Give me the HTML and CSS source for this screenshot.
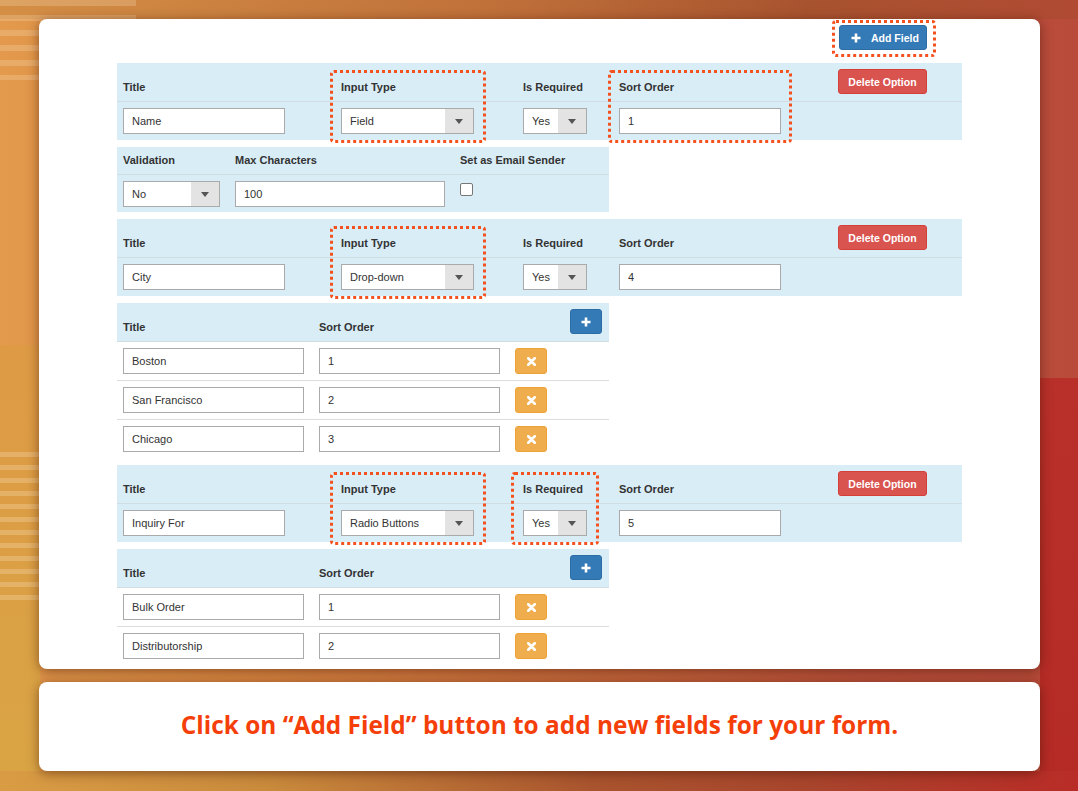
FILE: index.html
```html
<!DOCTYPE html>
<html>
<head>
<meta charset="utf-8">
<title>Form fields</title>
<link rel="stylesheet" href="styles.css">
</head>
<body>
<div class="page">
  <section class="card main-card">
    <div class="toolbar">
      <div class="add-wrap">
        <button class="btn btn-primary btn-add"><svg class="ico" viewBox="0 0 10 10" width="10" height="10"><path d="M5 0.5v9M0.5 5h9" stroke="#fff" stroke-width="2.6" fill="none"/></svg><span>Add Field</span></button>
        <span class="hl hl-add"></span>
      </div>
    </div>

    <div class="stack">
      <!-- Field 1 -->
      <div class="fblock">
        <div class="fgrid">
          <div class="th">Title</div>
          <div class="th">Input Type</div>
          <div class="th">Is Required</div>
          <div class="th">Sort Order</div>
          <div class="th"><button class="btn btn-danger">Delete Option</button></div>
          <div class="td"><input class="inp w-title" type="text" value="Name"></div>
          <div class="td"><div class="select w-type"><span class="sv">Field</span><span class="caret"></span></div></div>
          <div class="td"><div class="select w-req"><span class="sv">Yes</span><span class="caret"></span></div></div>
          <div class="td"><input class="inp w-title" type="text" value="1"></div>
          <div class="td"></div>
        </div>
        <span class="hl hl-type"></span>
        <span class="hl hl-sort"></span>
      </div>

      <!-- Validation -->
      <div class="vblock">
        <div class="vgrid">
          <div class="th th-short">Validation</div>
          <div class="th th-short">Max Characters</div>
          <div class="th th-short">Set as Email Sender</div>
          <div class="td td-short"><div class="select w-val"><span class="sv">No</span><span class="caret"></span></div></div>
          <div class="td td-short"><input class="inp w-max" type="text" value="100"></div>
          <div class="td td-short"><span class="check"></span></div>
        </div>
      </div>

      <!-- Field 2 -->
      <div class="fblock">
        <div class="fgrid">
          <div class="th">Title</div>
          <div class="th">Input Type</div>
          <div class="th">Is Required</div>
          <div class="th">Sort Order</div>
          <div class="th"><button class="btn btn-danger">Delete Option</button></div>
          <div class="td"><input class="inp w-title" type="text" value="City"></div>
          <div class="td"><div class="select w-type"><span class="sv">Drop-down</span><span class="caret"></span></div></div>
          <div class="td"><div class="select w-req"><span class="sv">Yes</span><span class="caret"></span></div></div>
          <div class="td"><input class="inp w-title" type="text" value="4"></div>
          <div class="td"></div>
        </div>
        <span class="hl hl-type"></span>
      </div>

      <!-- Options 1 -->
      <div class="oblock">
        <div class="ohead">
          <div class="th">Title</div>
          <div class="th">Sort Order</div>
          <div class="th th-end"><button class="btn btn-primary btn-icon"><svg viewBox="0 0 10 10" width="10" height="10"><path d="M5 0.5v9M0.5 5h9" stroke="#fff" stroke-width="2.6" fill="none"/></svg></button></div>
        </div>
        <div class="orow">
          <div class="td"><input class="inp w-opt" type="text" value="Boston"></div>
          <div class="td"><input class="inp w-opt" type="text" value="1"></div>
          <div class="td"><button class="btn btn-warning btn-x"><svg viewBox="0 0 10 10" width="9" height="9"><path d="M1.4 1.4L8.6 8.6M8.6 1.4L1.4 8.6" stroke="#fff" stroke-width="2.9" stroke-linecap="round" fill="none"/></svg></button></div>
        </div>
        <div class="orow">
          <div class="td"><input class="inp w-opt" type="text" value="San Francisco"></div>
          <div class="td"><input class="inp w-opt" type="text" value="2"></div>
          <div class="td"><button class="btn btn-warning btn-x"><svg viewBox="0 0 10 10" width="9" height="9"><path d="M1.4 1.4L8.6 8.6M8.6 1.4L1.4 8.6" stroke="#fff" stroke-width="2.9" stroke-linecap="round" fill="none"/></svg></button></div>
        </div>
        <div class="orow">
          <div class="td"><input class="inp w-opt" type="text" value="Chicago"></div>
          <div class="td"><input class="inp w-opt" type="text" value="3"></div>
          <div class="td"><button class="btn btn-warning btn-x"><svg viewBox="0 0 10 10" width="9" height="9"><path d="M1.4 1.4L8.6 8.6M8.6 1.4L1.4 8.6" stroke="#fff" stroke-width="2.9" stroke-linecap="round" fill="none"/></svg></button></div>
        </div>
      </div>

      <!-- Field 3 -->
      <div class="fblock">
        <div class="fgrid">
          <div class="th">Title</div>
          <div class="th">Input Type</div>
          <div class="th">Is Required</div>
          <div class="th">Sort Order</div>
          <div class="th"><button class="btn btn-danger">Delete Option</button></div>
          <div class="td"><input class="inp w-title" type="text" value="Inquiry For"></div>
          <div class="td"><div class="select w-type"><span class="sv">Radio Buttons</span><span class="caret"></span></div></div>
          <div class="td"><div class="select w-req"><span class="sv">Yes</span><span class="caret"></span></div></div>
          <div class="td"><input class="inp w-title" type="text" value="5"></div>
          <div class="td"></div>
        </div>
        <span class="hl hl-type"></span>
        <span class="hl hl-req"></span>
      </div>

      <!-- Options 2 -->
      <div class="oblock">
        <div class="ohead">
          <div class="th">Title</div>
          <div class="th">Sort Order</div>
          <div class="th th-end"><button class="btn btn-primary btn-icon"><svg viewBox="0 0 10 10" width="10" height="10"><path d="M5 0.5v9M0.5 5h9" stroke="#fff" stroke-width="2.6" fill="none"/></svg></button></div>
        </div>
        <div class="orow">
          <div class="td"><input class="inp w-opt" type="text" value="Bulk Order"></div>
          <div class="td"><input class="inp w-opt" type="text" value="1"></div>
          <div class="td"><button class="btn btn-warning btn-x"><svg viewBox="0 0 10 10" width="9" height="9"><path d="M1.4 1.4L8.6 8.6M8.6 1.4L1.4 8.6" stroke="#fff" stroke-width="2.9" stroke-linecap="round" fill="none"/></svg></button></div>
        </div>
        <div class="orow">
          <div class="td"><input class="inp w-opt" type="text" value="Distributorship"></div>
          <div class="td"><input class="inp w-opt" type="text" value="2"></div>
          <div class="td"><button class="btn btn-warning btn-x"><svg viewBox="0 0 10 10" width="9" height="9"><path d="M1.4 1.4L8.6 8.6M8.6 1.4L1.4 8.6" stroke="#fff" stroke-width="2.9" stroke-linecap="round" fill="none"/></svg></button></div>
        </div>
      </div>
    </div>
  </section>

  <section class="card caption-card">
    <p class="caption">Click on “Add Field” button to add new fields for your form.</p>
  </section>
</div>
</body>
</html>
```

FILE: styles.css
```css
* { box-sizing: border-box; }

html, body {
  margin: 0;
  padding: 0;
}

body {
  width: 1078px;
  height: 791px;
  overflow: hidden;
  font-family: "Liberation Sans", Arial, sans-serif;
  font-size: 11px;
  color: #333;
  background:
    repeating-linear-gradient(180deg, rgba(255, 236, 205, 0.22) 0 6px, transparent 6px 15px) 0 0 / 136px 80px no-repeat,
    repeating-linear-gradient(180deg, rgba(255, 236, 205, 0.25) 0 5px, transparent 5px 13px) 0 452px / 40px 156px no-repeat,
    linear-gradient(90deg, #d99c44 0%, #c98a3c 25%, #a9542e 55%, #a8452d 75%, #b92c27 100%) 0 771px / 100% 20px no-repeat,
    linear-gradient(90deg, #d48f45 0%, #c0713a 45%, #a8532f 75%, #b04a33 100%) 0 0 / 100% 19px no-repeat,
    linear-gradient(170deg, #de9a45, #d9a444) 0 345px / 40px 430px no-repeat,
    linear-gradient(#b9302a, #b52a25) 1040px 378px / 38px 420px no-repeat,
    linear-gradient(90deg, #e39a4c 0%, #d88641 25%, #c5683c 55%, #b9503b 80%, #b94b3b 100%);
}

.page {
  display: flex;
  flex-direction: column;
  gap: 13px;
  padding: 19px 38px 0 39px;
}

.card {
  background: #fff;
  border-radius: 8px;
  box-shadow: 0 2px 12px rgba(70, 22, 5, 0.55);
}

.main-card {
  padding: 6px 78px 4px;
}

/* toolbar */
.toolbar {
  display: flex;
  justify-content: flex-end;
  padding-right: 35px;
  margin-bottom: 13px;
}

.add-wrap {
  position: relative;
}

.btn {
  font-family: "Liberation Sans", Arial, sans-serif;
  font-weight: bold;
  font-size: 10.5px;
  color: #fff;
  border: 1px solid transparent;
  border-radius: 3px;
  padding: 0;
  margin: 0;
  height: 25px;
  display: inline-flex;
  align-items: center;
  justify-content: center;
  cursor: pointer;
}

.btn-primary {
  background: #337ab7;
  border-color: #2e6da4;
}

.btn-danger {
  background: #d9534f;
  border-color: #d43f3a;
  width: 89px;
}

.btn-warning {
  background: #f0ad4e;
  border-color: #eea236;
}

.btn-add {
  width: 88px;
  justify-content: flex-start;
  padding-left: 11px;
  gap: 10px;
}

.btn-icon {
  width: 32px;
}

.btn-x {
  width: 32px;
  height: 26px;
}

/* highlight boxes */
.hl {
  position: absolute;
  border: 3px dotted #f4511e;
  border-radius: 4px;
  pointer-events: none;
}

.hl-add {
  left: -7px;
  top: -5px;
  width: 104px;
  height: 37px;
}

.hl-type {
  left: 213px;
  top: 7px;
  width: 156px;
  height: 73px;
}

.hl-sort {
  left: 491px;
  top: 7px;
  width: 184px;
  height: 73px;
}

.hl-req {
  left: 394px;
  top: 7px;
  width: 88px;
  height: 73px;
}

/* stacks of blocks */
.stack {
  display: flex;
  flex-direction: column;
  align-items: flex-start;
  gap: 7px;
}

.fblock {
  position: relative;
  width: 845px;
  background: #d9edf7;
}

.fgrid {
  display: grid;
  grid-template-columns: 218px 182px 96px 219px 130px;
}

.vblock {
  width: 492px;
  background: #d9edf7;
}

.vgrid {
  display: grid;
  grid-template-columns: 112px 225px 155px;
}

.oblock {
  width: 492px;
  background: #fff;
}

.ohead,
.orow {
  display: grid;
  grid-template-columns: 196px 196px 100px;
}

.ohead {
  background: #d9edf7;
}

.orow + .orow {
  border-top: 1px solid #dddddd;
}

.th {
  height: 39px;
  border-bottom: 1px solid #d2dde3;
  padding: 0 6px 6px;
  display: flex;
  align-items: flex-end;
  font-weight: bold;
  line-height: 15px;
  color: #333;
}

.th .btn {
  margin-bottom: 1px;
}

.th-short {
  height: 28px;
  padding-bottom: 6px;
}

.th-end {
  justify-content: flex-end;
  padding-right: 7px;
}

.td {
  height: 38px;
  padding: 6px 6px 0;
}

.td-short {
  height: 37px;
}

/* form controls */
.inp {
  display: block;
  height: 26px;
  margin: 0;
  border: 1px solid #aaa;
  border-radius: 0;
  background: #fff;
  padding: 0 8px;
  font-family: "Liberation Sans", Arial, sans-serif;
  font-size: 11px;
  color: #333;
  outline: none;
}

.w-title { width: 162px; }
.w-max { width: 210px; }
.w-opt { width: 181px; }

.select {
  display: flex;
  height: 26px;
  border: 1px solid #aaa;
  background: #fff;
}

.w-type { width: 133px; }
.w-req { width: 64px; }
.w-val { width: 97px; }

.sv {
  flex: 1;
  padding-left: 8px;
  line-height: 24px;
  color: #333;
  white-space: nowrap;
}

.caret {
  width: 28px;
  background: #e3e3e3;
  display: flex;
  align-items: center;
  justify-content: center;
}

.caret::after {
  content: "";
  border-left: 4px solid transparent;
  border-right: 4px solid transparent;
  border-top: 5px solid #555;
}

.check {
  display: block;
  width: 13px;
  height: 13px;
  margin-top: 2px;
  border: 1px solid #777;
  border-radius: 2px;
  background: #fff;
}

/* caption */
.caption-card {
  height: 89px;
  display: flex;
  align-items: center;
  justify-content: center;
}

.caption {
  margin: 0;
  font-family: "Open Sans", Lato, sans-serif;
  font-weight: 700;
  font-size: 24.4px;
  line-height: 30px;
  color: #f53f0a;
  padding-bottom: 3px;
}
```
